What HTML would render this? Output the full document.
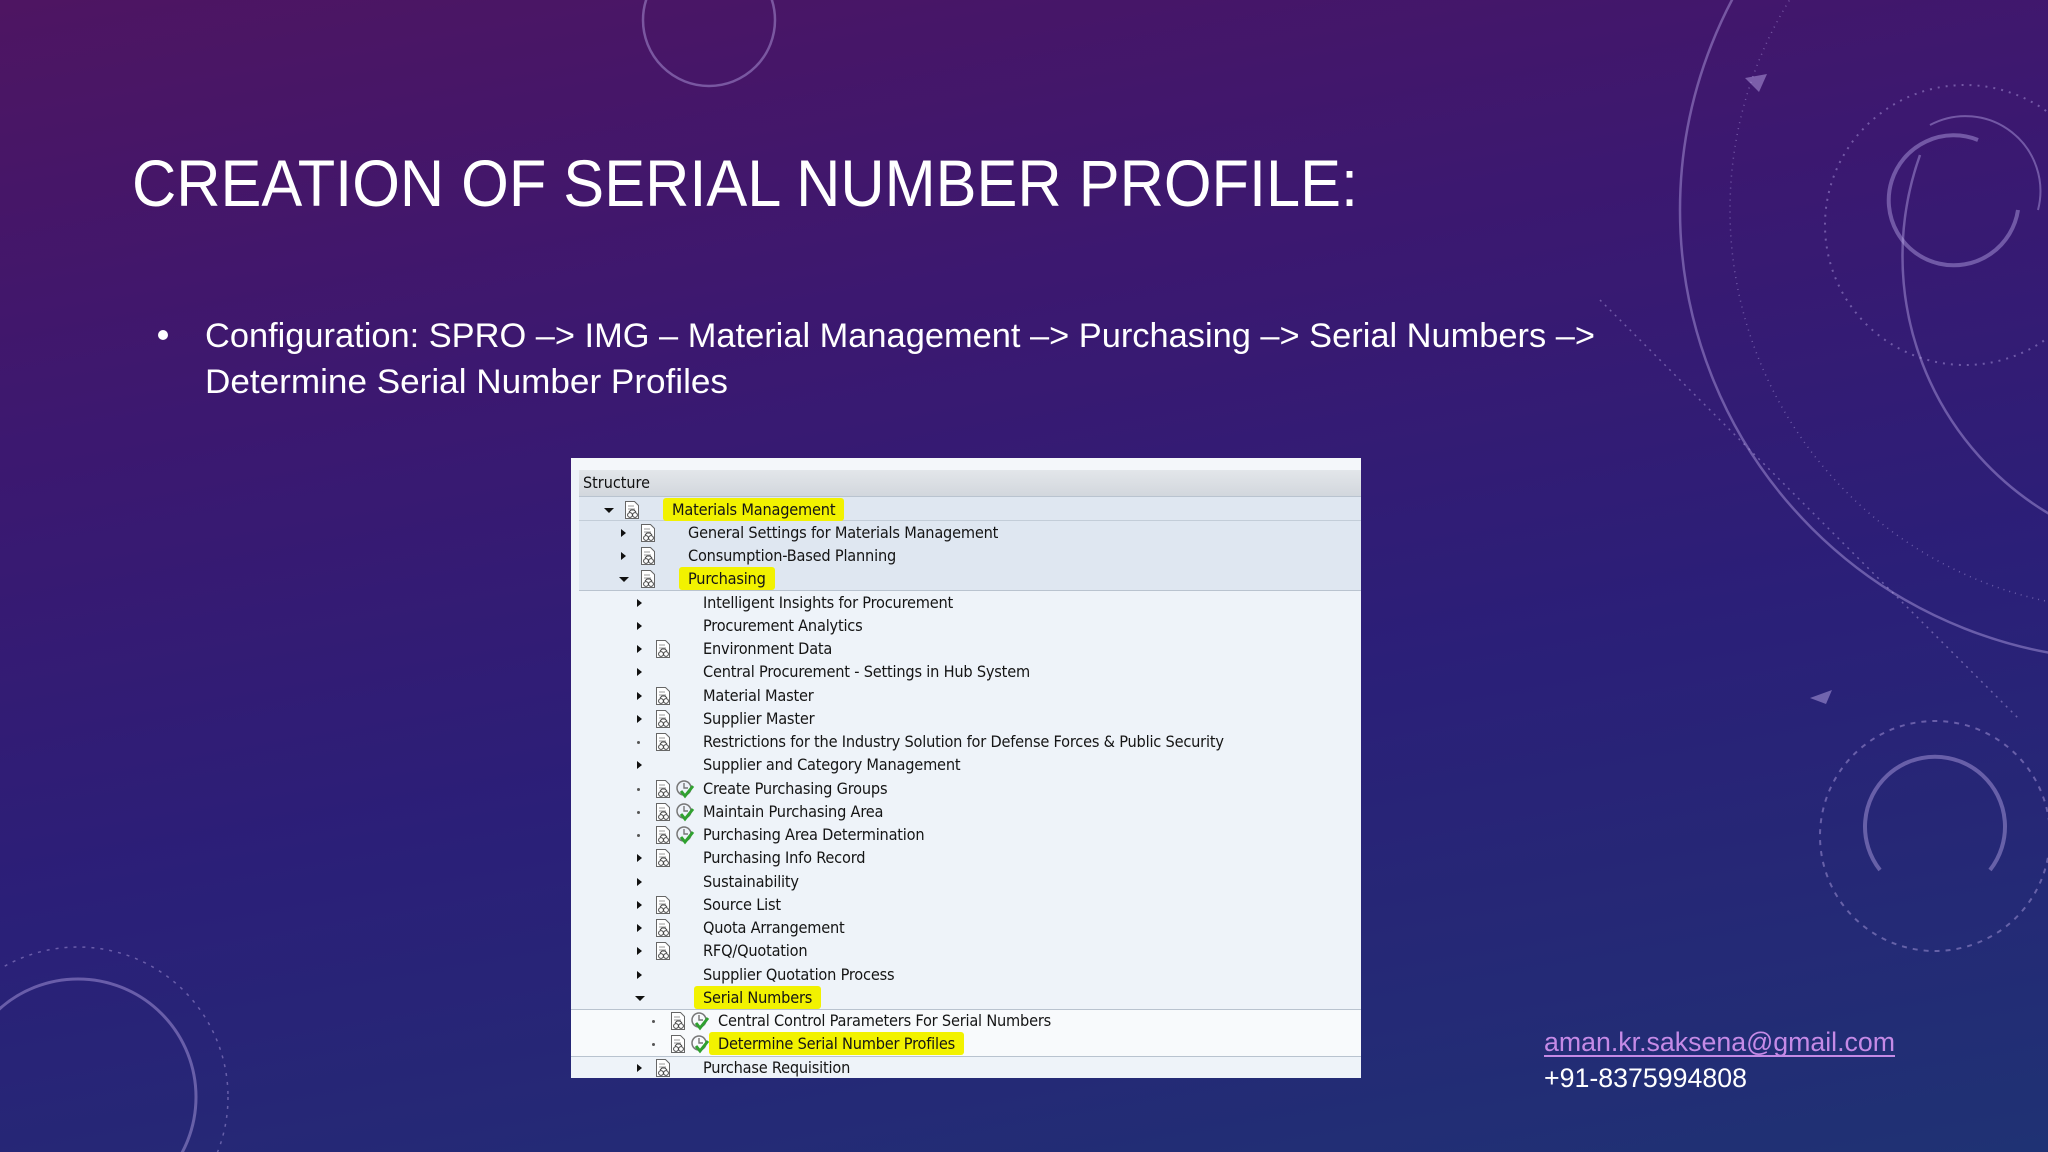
<!DOCTYPE html>
<html><head><meta charset="utf-8"><style>
html,body{margin:0;padding:0;width:2048px;height:1152px;overflow:hidden}
body{position:relative;font-family:"Liberation Sans",sans-serif;
background:linear-gradient(170deg,#4e1562 0%,#3c1870 30%,#2b1f78 60%,#1f3274 100%);}
.bg{position:absolute;left:0;top:0}
#panel{position:absolute;left:571px;top:458px;width:790px;height:620px;background:#eef3f9;overflow:hidden}
.r{position:absolute;left:0;width:790px;height:23px}
.r span{position:absolute;top:0;line-height:23px;font-size:16.2px;color:#151515;white-space:nowrap;font-family:"DejaVu Sans Condensed","Liberation Sans Narrow","Liberation Sans",sans-serif;letter-spacing:-0.2px}
.hl{background:#f2f200;padding:0 9px;margin-left:-9px;border-radius:3px}
.tr{position:absolute;top:8px;width:0;height:0;border-top:4px solid transparent;border-bottom:4px solid transparent;border-left:5px solid #111}
.td{position:absolute;top:10px;width:0;height:0;border-left:5px solid transparent;border-right:5px solid transparent;border-top:5px solid #111}
.dt{position:absolute;top:11px;width:3px;height:3px;background:#555;border-radius:50%}
.ic{position:absolute;top:2px;width:16px;height:20px}
.ck{position:absolute;top:2px;width:20px;height:20px}
</style></head><body>
<svg class="bg" width="2048" height="1152" viewBox="0 0 2048 1152" fill="none">
<g stroke="#b9a6e6" stroke-opacity="0.45">
<circle cx="2130" cy="210" r="450" stroke-width="2.5"/>
<circle cx="2130" cy="210" r="400" stroke-width="1.5" stroke-dasharray="1 5"/>
<path d="M1920 155 A300 300 0 0 0 2060 520" stroke-width="2.5"/>
<circle cx="1965" cy="225" r="140" stroke-width="2" stroke-dasharray="2 6"/>
<path d="M1978 140 A65 65 0 1 0 2018 210" stroke-width="4"/>
<path d="M1930 125 A75 75 0 0 1 2038 210" stroke-width="2"/>
<circle cx="709" cy="20" r="66" stroke-width="2.5"/>
<circle cx="78" cy="1097" r="118" stroke-width="3"/>
<circle cx="78" cy="1097" r="150" stroke-width="1.5" stroke-dasharray="3 6"/>
<circle cx="1935" cy="836" r="115" stroke-width="2" stroke-dasharray="5 6"/>
<path d="M1880 870 A70 70 0 1 1 1990 870" stroke-width="4"/>
<path d="M1600 300 L2020 720" stroke-width="1.5" stroke-dasharray="2 5"/>
</g>
<g fill="#b9a6e6" fill-opacity="0.5"><path d="M1745 78 l22 -4 -8 18 z"/><path d="M1832 690 l-22 8 16 6 z"/></g>
<text x="132" y="206" fill="#fff" font-size="66" font-family="Liberation Sans, sans-serif" textLength="1226" lengthAdjust="spacingAndGlyphs">CREATION OF SERIAL NUMBER PROFILE:</text>
<circle cx="163" cy="335" r="5" fill="#fff"/>
<text x="205" y="347" fill="#fff" font-size="34" font-family="Liberation Sans, sans-serif" textLength="1390" lengthAdjust="spacingAndGlyphs">Configuration: SPRO –&gt; IMG – Material Management –&gt; Purchasing –&gt; Serial Numbers –&gt;</text>
<text x="205" y="393" fill="#fff" font-size="34" font-family="Liberation Sans, sans-serif" textLength="523" lengthAdjust="spacingAndGlyphs">Determine Serial Number Profiles</text>
<text x="1544" y="1051" fill="#c58ae6" font-size="27" font-family="Liberation Sans, sans-serif" textLength="351" lengthAdjust="spacingAndGlyphs">aman.kr.saksena@gmail.com</text>
<line x1="1544" y1="1056" x2="1895" y2="1056" stroke="#c58ae6" stroke-width="2"/>
<text x="1544" y="1087" fill="#fff" font-size="27" font-family="Liberation Sans, sans-serif" textLength="203" lengthAdjust="spacingAndGlyphs">+91-8375994808</text>
<defs>
<symbol id="doc" viewBox="0 0 16 20"><path d="M1.5 1.5h9l4 4v13h-13z" fill="#fff" stroke="#666"/><path d="M4 6h6M4 9h7" stroke="#999"/><circle cx="6" cy="15" r="2.4" fill="none" stroke="#444"/><circle cx="11" cy="15" r="2.4" fill="none" stroke="#444"/><path d="M5 12l2-2h3l2 2" stroke="#444" fill="none"/></symbol>
<symbol id="chk" viewBox="0 0 20 20"><circle cx="9" cy="9" r="7" fill="none" stroke="#777" stroke-width="1.5"/><path d="M9 4v5h4" stroke="#777" stroke-width="1.4" fill="none"/><path d="M6 12l4 5 8-10" stroke="#2fa12f" stroke-width="3" fill="none"/></symbol>
</defs>
</svg>
<div id="panel">
<div style="position:absolute;left:0;top:0;width:790px;height:12px;background:#f4f7fa"></div>
<div style="position:absolute;left:8px;top:12px;width:782px;height:26px;background:linear-gradient(#e3e6ea,#d2d7dd);border-bottom:1px solid #b9c3cf"></div>
<div style="position:absolute;left:12px;top:12px;line-height:26px;font-size:16px;color:#111;font-family:'DejaVu Sans Condensed','Liberation Sans',sans-serif">Structure</div>
<div style="position:absolute;left:8px;top:39px;width:782px;height:93px;background:#dfe7f1;border-bottom:1px solid #b9c3cf"></div>
<div style="position:absolute;left:8px;top:39px;width:782px;height:23px;border-bottom:1px solid #c3cdd8"></div>
<div style="position:absolute;left:0;top:551px;width:790px;height:46px;background:#f8fafc;border-top:1px solid #b9c3cf;border-bottom:1px solid #b9c3cf"></div>

<div class="r" style="top:39.5px"><i class="td" style="left:33px"></i><svg class="ic" style="left:53px"><use href="#doc"/></svg><span style="left:101px" class="hl">Materials Management</span></div>
<div class="r" style="top:62.75px"><i class="tr" style="left:50px"></i><svg class="ic" style="left:69px"><use href="#doc"/></svg><span style="left:117px">General Settings for Materials Management</span></div>
<div class="r" style="top:86px"><i class="tr" style="left:50px"></i><svg class="ic" style="left:69px"><use href="#doc"/></svg><span style="left:117px">Consumption-Based Planning</span></div>
<div class="r" style="top:109.25px"><i class="td" style="left:48px"></i><svg class="ic" style="left:69px"><use href="#doc"/></svg><span style="left:117px" class="hl">Purchasing</span></div>
<div class="r" style="top:132.5px"><i class="tr" style="left:66px"></i><span style="left:132px">Intelligent Insights for Procurement</span></div>
<div class="r" style="top:155.75px"><i class="tr" style="left:66px"></i><span style="left:132px">Procurement Analytics</span></div>
<div class="r" style="top:179px"><i class="tr" style="left:66px"></i><svg class="ic" style="left:84px"><use href="#doc"/></svg><span style="left:132px">Environment Data</span></div>
<div class="r" style="top:202.25px"><i class="tr" style="left:66px"></i><span style="left:132px">Central Procurement - Settings in Hub System</span></div>
<div class="r" style="top:225.5px"><i class="tr" style="left:66px"></i><svg class="ic" style="left:84px"><use href="#doc"/></svg><span style="left:132px">Material Master</span></div>
<div class="r" style="top:248.75px"><i class="tr" style="left:66px"></i><svg class="ic" style="left:84px"><use href="#doc"/></svg><span style="left:132px">Supplier Master</span></div>
<div class="r" style="top:272px"><i class="dt" style="left:66px"></i><svg class="ic" style="left:84px"><use href="#doc"/></svg><span style="left:132px">Restrictions for the Industry Solution for Defense Forces &amp; Public Security</span></div>
<div class="r" style="top:295.25px"><i class="tr" style="left:66px"></i><span style="left:132px">Supplier and Category Management</span></div>
<div class="r" style="top:318.5px"><i class="dt" style="left:66px"></i><svg class="ic" style="left:84px"><use href="#doc"/></svg><svg class="ck" style="left:104px"><use href="#chk"/></svg><span style="left:132px">Create Purchasing Groups</span></div>
<div class="r" style="top:341.75px"><i class="dt" style="left:66px"></i><svg class="ic" style="left:84px"><use href="#doc"/></svg><svg class="ck" style="left:104px"><use href="#chk"/></svg><span style="left:132px">Maintain Purchasing Area</span></div>
<div class="r" style="top:365px"><i class="dt" style="left:66px"></i><svg class="ic" style="left:84px"><use href="#doc"/></svg><svg class="ck" style="left:104px"><use href="#chk"/></svg><span style="left:132px">Purchasing Area Determination</span></div>
<div class="r" style="top:388.25px"><i class="tr" style="left:66px"></i><svg class="ic" style="left:84px"><use href="#doc"/></svg><span style="left:132px">Purchasing Info Record</span></div>
<div class="r" style="top:411.5px"><i class="tr" style="left:66px"></i><span style="left:132px">Sustainability</span></div>
<div class="r" style="top:434.75px"><i class="tr" style="left:66px"></i><svg class="ic" style="left:84px"><use href="#doc"/></svg><span style="left:132px">Source List</span></div>
<div class="r" style="top:458px"><i class="tr" style="left:66px"></i><svg class="ic" style="left:84px"><use href="#doc"/></svg><span style="left:132px">Quota Arrangement</span></div>
<div class="r" style="top:481.25px"><i class="tr" style="left:66px"></i><svg class="ic" style="left:84px"><use href="#doc"/></svg><span style="left:132px">RFQ/Quotation</span></div>
<div class="r" style="top:504.5px"><i class="tr" style="left:66px"></i><span style="left:132px">Supplier Quotation Process</span></div>
<div class="r" style="top:527.75px"><i class="td" style="left:64px"></i><span style="left:132px" class="hl">Serial Numbers</span></div>
<div class="r" style="top:551px"><i class="dt" style="left:81px"></i><svg class="ic" style="left:99px"><use href="#doc"/></svg><svg class="ck" style="left:119px"><use href="#chk"/></svg><span style="left:147px">Central Control Parameters For Serial Numbers</span></div>
<div class="r" style="top:574.25px"><i class="dt" style="left:81px"></i><svg class="ic" style="left:99px"><use href="#doc"/></svg><svg class="ck" style="left:119px"><use href="#chk"/></svg><span style="left:147px" class="hl">Determine Serial Number Profiles</span></div>
<div class="r" style="top:597.5px"><i class="tr" style="left:66px"></i><svg class="ic" style="left:84px"><use href="#doc"/></svg><span style="left:132px">Purchase Requisition</span></div>
</div>
</body></html>
